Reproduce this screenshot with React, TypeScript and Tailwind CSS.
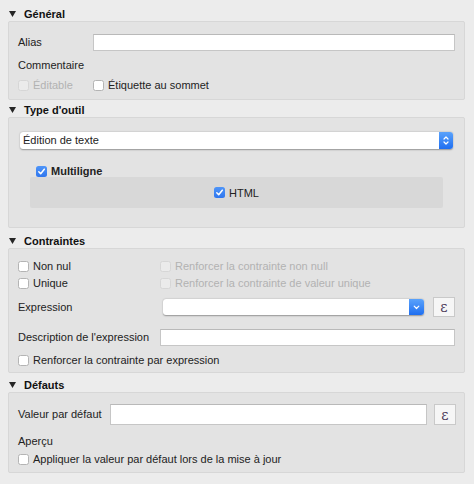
import React from 'react';

const font = { fontFamily: '"Liberation Sans", Arial, sans-serif' };

function Triangle() {
  return (
    <svg width="7" height="6" viewBox="0 0 7 6" className="shrink-0">
      <polygon points="0,0 7,0 3.5,6" fill="#262626" />
    </svg>
  );
}

function Checkbox({ checked = false, disabled = false }: { checked?: boolean; disabled?: boolean }) {
  if (checked) {
    return (
      <span className="flex h-[11px] w-[11px] shrink-0 items-center justify-center rounded-[2.5px] bg-gradient-to-b from-[#4f95f8] to-[#2f76ee]">
        <svg width="9" height="9" viewBox="0 0 9 9">
          <path d="M1.8 4.8 L3.7 6.7 L7.3 2.2" fill="none" stroke="white" strokeWidth="1.5" strokeLinecap="round" strokeLinejoin="round" />
        </svg>
      </span>
    );
  }
  return (
    <span
      className={`block h-[11px] w-[11px] shrink-0 rounded-[2.5px] border ${
        disabled ? 'border-[#d6d6d6] bg-[#ebebeb]' : 'border-[#b4b4b4] bg-white'
      }`}
    />
  );
}

function CheckLabel({
  label,
  checked,
  disabled,
  bold,
}: {
  label: string;
  checked?: boolean;
  disabled?: boolean;
  bold?: boolean;
}) {
  return (
    <div className="flex items-center gap-[4px]">
      <Checkbox checked={checked} disabled={disabled} />
      <span
        className={`whitespace-nowrap text-[11px] leading-[16px] ${
          disabled ? 'text-[#b2b2b2]' : 'text-[#222]'
        } ${bold ? 'font-bold' : ''}`}
      >
        {label}
      </span>
    </div>
  );
}

function TextInput({ className = '' }: { className?: string }) {
  return <div className={`border border-[#c6c6c6] border-t-[#b9b9b9] bg-white ${className}`} />;
}

function EpsButton({ className = '' }: { className?: string }) {
  return (
    <div
      className={`flex w-[22px] shrink-0 items-center justify-center border border-[#c9c9c9] bg-[#f6f6f6] text-[14px] leading-none text-[#4a3858] ${className}`}
      style={{ fontFamily: '"DejaVu Serif", "Liberation Serif", serif' }}
    >
      ε
    </div>
  );
}

function Header({ title }: { title: string }) {
  return (
    <div className="flex h-[18px] items-center gap-[8px] pl-[1px] pt-[4px]">
      <Triangle />
      <span className="text-[11px] font-bold leading-[14px] text-[#111]">{title}</span>
    </div>
  );
}

function Box({ children, className = '' }: { children: React.ReactNode; className?: string }) {
  return (
    <div className={`w-[457px] rounded-[2px] border border-[#d7d7d7] bg-[#e3e3e3] ${className}`}>
      {children}
    </div>
  );
}

export default function App() {
  return (
    <div className="h-[484px] w-[474px] overflow-hidden bg-[#ececec] pl-2" style={font}>
      {/* Général */}
      <div className="pt-[3px]">
        <Header title="Général" />
        <Box className="pl-[9px] pr-[9px] pt-[12px] pb-[6px]">
          <div className="flex h-[17px] items-center">
            <span className="w-[75px] text-[11px] text-[#222]">Alias</span>
            <TextInput className="h-[17px] flex-1" />
          </div>
          <div className="mt-[6px] flex h-[16px] items-center text-[11px] text-[#222]">Commentaire</div>
          <div className="mt-[4px] flex h-[16px] items-center">
            <div className="w-[75px]">
              <CheckLabel label="Éditable" disabled />
            </div>
            <CheckLabel label="Étiquette au sommet" />
          </div>
        </Box>
      </div>

      {/* Type d'outil */}
      <div className="-mt-[1px]">
        <Header title="Type d'outil" />
        <Box className="pl-[11px] pr-[11px] pt-[14px] pb-[19px]">
          <div className="flex h-[17px] rounded-[3px] bg-white shadow-[0_0.5px_1.5px_rgba(0,0,0,0.35)]">
            <span className="flex flex-1 items-center pl-[3px] text-[11px] text-[#222]">Édition de texte</span>
            <div className="flex w-[14px] flex-col items-center justify-center gap-[1px] rounded-r-[3px] bg-gradient-to-b from-[#5aa2fb] to-[#1e6ef0]">
              <svg width="6" height="11" viewBox="0 0 6 11">
                <path d="M1 4 L3 2 L5 4 M1 7 L3 9 L5 7" fill="none" stroke="white" strokeWidth="1.2" strokeLinecap="round" strokeLinejoin="round" />
              </svg>
            </div>
          </div>
          <div className="mt-[16px] flex h-[12px] items-center pl-[16px]">
            <CheckLabel label="Multiligne" checked bold />
          </div>
          <div className="mx-[10px] flex h-[31px] items-center justify-center rounded-[2px] bg-[#d8d8d8]">
            <CheckLabel label="HTML" checked />
          </div>
        </Box>
      </div>

      {/* Contraintes */}
      <div className="mt-[2px]">
        <Header title="Contraintes" />
        <Box className="pl-[9px] pr-[9px] pt-[9px] pb-[4px]">
          <div className="flex h-[16px] items-center">
            <div className="w-[142px]">
              <CheckLabel label="Non nul" />
            </div>
            <CheckLabel label="Renforcer la contrainte non null" disabled />
          </div>
          <div className="mt-[1px] flex h-[16px] items-center">
            <div className="w-[142px]">
              <CheckLabel label="Unique" />
            </div>
            <CheckLabel label="Renforcer la contrainte de valeur unique" disabled />
          </div>
          <div className="mt-[6px] flex h-[20px] items-center">
            <span className="w-[145px] text-[11px] text-[#222]">Expression</span>
            <div className="flex h-[16px] flex-1 rounded-[3px] bg-white shadow-[0_0.5px_1.5px_rgba(0,0,0,0.35)]">
              <span className="flex-1" />
              <div className="flex w-[15px] items-center justify-center rounded-r-[3px] bg-gradient-to-b from-[#5aa2fb] to-[#1e6ef0]">
                <svg width="7" height="5" viewBox="0 0 7 5">
                  <path d="M1.2 1.2 L3.5 3.5 L5.8 1.2" fill="none" stroke="white" strokeWidth="1.2" strokeLinecap="round" strokeLinejoin="round" />
                </svg>
              </div>
            </div>
            <EpsButton className="ml-[9px] h-[20px]" />
          </div>
          <div className="mt-[12px] flex h-[17px] items-center">
            <span className="w-[142px] whitespace-nowrap text-[11px] text-[#222]">Description de l'expression</span>
            <TextInput className="h-[17px] flex-1" />
          </div>
          <div className="mt-[6px] flex h-[16px] items-center">
            <CheckLabel label="Renforcer la contrainte par expression" />
          </div>
        </Box>
      </div>

      {/* Défauts */}
      <div className="mt-[1px]">
        <Header title="Défauts" />
        <Box className="pl-[9px] pr-[8px] pt-[11px] pb-[5px]">
          <div className="flex h-[21px] items-center">
            <span className="w-[92px] whitespace-nowrap text-[11px] text-[#222]">Valeur par défaut</span>
            <TextInput className="h-[21px] flex-1" />
            <EpsButton className="ml-[7px] h-[21px]" />
          </div>
          <div className="mt-[8px] flex h-[16px] items-center text-[11px] text-[#222]">Aperçu</div>
          <div className="mt-[2px] flex h-[16px] items-center">
            <CheckLabel label="Appliquer la valeur par défaut lors de la mise à jour" />
          </div>
        </Box>
      </div>
    </div>
  );
}
